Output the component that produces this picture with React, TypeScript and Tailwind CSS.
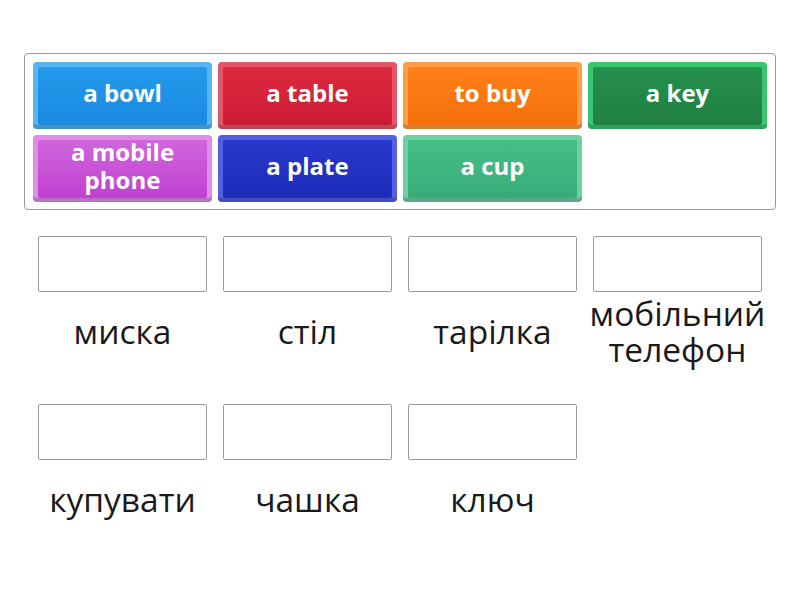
import React from "react";

type Tile = { label: React.ReactNode; outer: string; face: string };

const tiles: Tile[] = [
  { label: "a bowl", outer: "bg-[#58b4f2]", face: "from-[#239aec] to-[#1a8ae0]" },
  { label: "a table", outer: "bg-[#e5566a]", face: "from-[#dc2a40] to-[#cc1c34]" },
  { label: "to buy", outer: "bg-[#ff9d45]", face: "from-[#ff8118] to-[#f5700a]" },
  { label: "a key", outer: "bg-[#38c66e]", face: "from-[#26904e] to-[#1f8043]" },
  { label: <>a mobile<br />phone</>, outer: "bg-[#de8ee8]", face: "from-[#d065dc] to-[#c040d0]" },
  { label: "a plate", outer: "bg-[#5260e2]", face: "from-[#2838cc] to-[#1e2cba]" },
  { label: "a cup", outer: "bg-[#6fd0a3]", face: "from-[#46be88] to-[#38ac78]" },
];

const targets: React.ReactNode[] = [
  "миска",
  "стіл",
  "тарілка",
  <>мобільний<br />телефон</>,
  "купувати",
  "чашка",
  "ключ",
];

export default function App() {
  return (
    <div
      className="w-[800px] h-[600px] bg-white overflow-hidden"
      style={{ fontFamily: '"Open Sans", "Noto Sans", sans-serif' }}
    >
      <div className="mx-[24px] mt-[53px] border border-[#9a9a9a] rounded-[4px] pt-[8px] pb-[7px] px-[8px]">
        <div className="grid grid-cols-4 gap-x-[6px] gap-y-[6px]">
          {tiles.map((t, i) => (
            <div
              key={i}
              className={`relative h-[67px] rounded-[4px] ${t.outer} pt-[5px] px-[5px] pb-[4px] shadow-[inset_0_-4px_0_rgba(0,0,0,0.18)]`}
            >
              <div className={`h-full rounded-[2px] bg-gradient-to-b ${t.face}`} />
              <div className="absolute inset-0 pb-[6px] flex items-center justify-center text-center text-white font-bold text-[24px] leading-[28px]">
                <span>{t.label}</span>
              </div>
            </div>
          ))}
        </div>
      </div>
      <div className="mx-[38px] mt-[26px] grid grid-cols-4 gap-x-[16px] gap-y-[30px]">
        {targets.map((t, i) => (
          <div key={i} className="flex flex-col">
            <div className="h-[56px] border border-[#9a9a9a] rounded-[2px] bg-white" />
            <div className="h-[82px] pb-[4px] flex items-center justify-center text-center text-[33.5px] leading-[36px] text-[#1a1a1a] whitespace-nowrap">
              <span>{t}</span>
            </div>
          </div>
        ))}
      </div>
    </div>
  );
}
